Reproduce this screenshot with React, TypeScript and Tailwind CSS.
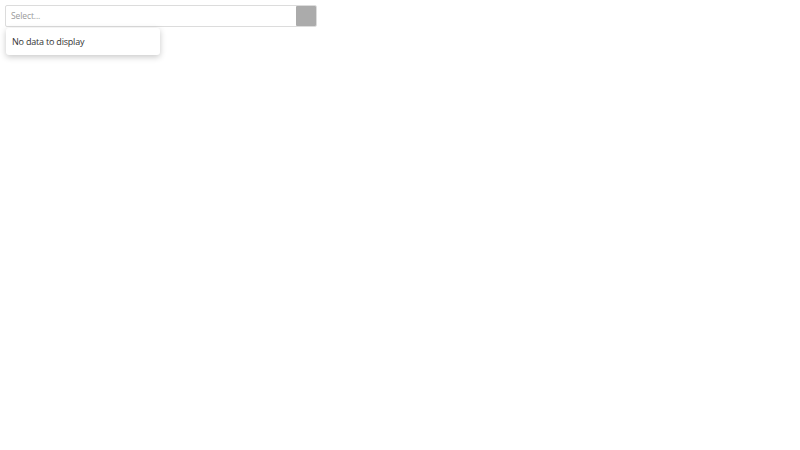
import { useState } from "react";

export default function App() {
  const [value, setValue] = useState("");

  return (
    <div className="min-h-screen bg-white p-[5px] font-['Open_Sans',sans-serif]">
      <div className="relative w-[312px]">
        <div className="flex h-[22px] items-center rounded-[2px] border border-[#dcdcdc] bg-white pl-[5px]">
          <input
            value={value}
            onChange={(e) => setValue(e.target.value)}
            placeholder="Select..."
            className="min-w-0 flex-1 bg-transparent text-[8.5px] tracking-[-0.1px] text-[#333] outline-none placeholder:text-[#9a9a9a]"
          />
          <button className="h-[20px] w-[20px] rounded-[1px] bg-[#ababab]" />
        </div>

        {/* dropdown */}
        <div className="absolute left-[1px] top-[23px] w-[154px] rounded-[3px] bg-white px-[6px] py-[6px] shadow-[0_2px_6px_rgba(0,0,0,0.22)]">
          <p className="text-[9px] leading-[15px] tracking-[-0.2px] text-[#333]">No data to display</p>
        </div>
      </div>
    </div>
  );
}
